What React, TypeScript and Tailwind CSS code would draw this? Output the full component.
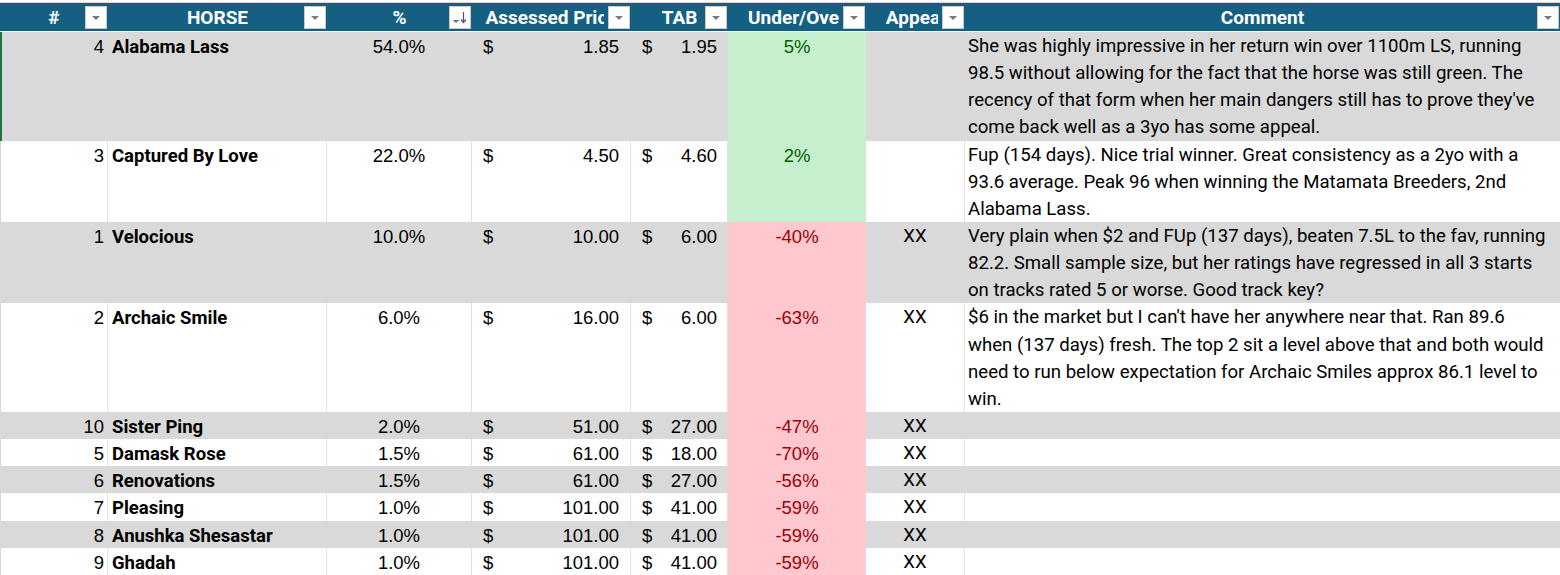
import React from 'react';

type Row = {
  no: number;
  horse: string;
  pct: string;
  price: string;
  tab: string;
  uo: string;
  appeal: string;
  comment: string[];
};

const rows: Row[] = [
  {
    no: 4,
    horse: 'Alabama Lass',
    pct: '54.0%',
    price: '1.85',
    tab: '1.95',
    uo: '5%',
    appeal: '',
    comment: [
      'She was highly impressive in her return win over 1100m LS, running',
      '98.5 without allowing for the fact that the horse was still green. The',
      "recency of that form when her main dangers still has to prove they've",
      'come back well as a 3yo has some appeal.',
    ],
  },
  {
    no: 3,
    horse: 'Captured By Love',
    pct: '22.0%',
    price: '4.50',
    tab: '4.60',
    uo: '2%',
    appeal: '',
    comment: [
      'Fup (154 days). Nice trial winner. Great consistency as a 2yo with a',
      '93.6 average. Peak 96 when winning the Matamata Breeders, 2nd',
      'Alabama Lass.',
    ],
  },
  {
    no: 1,
    horse: 'Velocious',
    pct: '10.0%',
    price: '10.00',
    tab: '6.00',
    uo: '-40%',
    appeal: 'XX',
    comment: [
      'Very plain when $2 and FUp (137 days), beaten 7.5L to the fav, running',
      '82.2. Small sample size, but her ratings have regressed in all 3 starts',
      'on tracks rated 5 or worse. Good track key?',
    ],
  },
  {
    no: 2,
    horse: 'Archaic Smile',
    pct: '6.0%',
    price: '16.00',
    tab: '6.00',
    uo: '-63%',
    appeal: 'XX',
    comment: [
      "$6 in the market but I can't have her anywhere near that. Ran 89.6",
      'when (137 days) fresh. The top 2 sit a level above that and both would',
      'need to run below expectation for Archaic Smiles approx 86.1 level to',
      'win.',
    ],
  },
  { no: 10, horse: 'Sister Ping', pct: '2.0%', price: '51.00', tab: '27.00', uo: '-47%', appeal: 'XX', comment: [] },
  { no: 5, horse: 'Damask Rose', pct: '1.5%', price: '61.00', tab: '18.00', uo: '-70%', appeal: 'XX', comment: [] },
  { no: 6, horse: 'Renovations', pct: '1.5%', price: '61.00', tab: '27.00', uo: '-56%', appeal: 'XX', comment: [] },
  { no: 7, horse: 'Pleasing', pct: '1.0%', price: '101.00', tab: '41.00', uo: '-59%', appeal: 'XX', comment: [] },
  { no: 8, horse: 'Anushka Shesastar', pct: '1.0%', price: '101.00', tab: '41.00', uo: '-59%', appeal: 'XX', comment: [] },
  { no: 9, horse: 'Ghadah', pct: '1.0%', price: '101.00', tab: '41.00', uo: '-59%', appeal: 'XX', comment: [] },
];

// row height by number of wrapped comment lines
const rowHeight: Record<number, string> = {
  1: 'h-[27.15px]',
  3: 'h-[81.45px]',
  4: 'h-[108.6px]',
};

const cols = 'grid grid-cols-[108px_219px_145px_159px_97px_138px_99px_595px]';
const numFont = "font-['Liberation_Sans',Arial,sans-serif] text-[18.5px] leading-[27.15px] pt-[1px]";
const textFont = "font-['Roboto',sans-serif] text-[18.6px]";

function FilterButton() {
  return (
    <div className="absolute right-[1px] top-[3px] h-[23px] w-[22px] bg-white border border-[#c9c9c9] shadow-[-4px_0_0_#156082]">
      <svg width="20" height="21" viewBox="0 0 20 21">
        <polygon points="6,9 14,9 10,13" fill="#7b7b7b" />
      </svg>
    </div>
  );
}

function SortButton() {
  return (
    <div className="absolute right-[1px] top-[3px] h-[23px] w-[22px] bg-white border border-[#c9c9c9]">
      <svg width="20" height="21" viewBox="0 0 20 21">
        <polygon points="3,13 9,13 6,16" fill="#6b6b6b" />
        <line x1="13.5" y1="5" x2="13.5" y2="15" stroke="#555" strokeWidth="1.2" />
        <polyline points="11,12.5 13.5,15.5 16,12.5" fill="none" stroke="#555" strokeWidth="1.2" />
      </svg>
    </div>
  );
}

function HeaderCell({ label, sort }: { label: string; sort?: boolean }) {
  return (
    <div className="relative flex h-full items-center justify-center overflow-hidden whitespace-nowrap pt-[3px]">
      <span>{label}</span>
      {sort ? <SortButton /> : <FilterButton />}
    </div>
  );
}

export default function App() {
  return (
    <div className="w-[1560px] h-[575px] overflow-hidden bg-white text-black">
      <div className="h-[3px] border-b border-[#d6d6d6]" />

      {/* header */}
      <div
        className={`${cols} h-[28px] bg-[#156082] text-white font-bold font-['Liberation_Sans_Narrow','Roboto',sans-serif] text-[19px]`}
      >
        <HeaderCell label="#" />
        <HeaderCell label="HORSE" />
        <HeaderCell label="%" sort />
        <HeaderCell label="Assessed Price" />
        <HeaderCell label="TAB" />
        <HeaderCell label="Under/Over" />
        <HeaderCell label="Appeal" />
        <HeaderCell label="Comment" />
      </div>
      <div className="h-[1px] bg-white" />

      {/* rows */}
      {rows.map((r, i) => {
        const banded = i % 2 === 0;
        const bg = banded ? 'bg-[#d9d9d9]' : 'bg-white';
        const line = banded ? 'border-r border-[#d9d9d9]' : 'border-r border-[#e2e2e2]';
        const pos = !r.uo.startsWith('-');
        const lines = r.comment.length ? r.comment : [''];
        return (
          <div key={r.no} className={`${cols} ${bg} ${rowHeight[lines.length]} overflow-hidden`}>
            <div
              className={`${line} ${numFont} text-right pr-[3px] ${
                i === 0 ? 'border-l-2 border-l-[#217346]' : banded ? '' : 'border-l border-l-[#d6d6d6]'
              }`}
            >
              {r.no}
            </div>
            <div className={`${line} font-['Roboto',sans-serif] font-bold text-[18.5px] leading-[27.15px] pt-[2px] pl-[4px] whitespace-nowrap`}>
              {r.horse}
            </div>
            <div className={`${line} ${numFont} text-center`}>{r.pct}</div>
            <div className={`${line} ${numFont} flex justify-between items-start pl-[11px] pr-[11px]`}>
              <span>$</span>
              <span>{r.price}</span>
            </div>
            <div className={`${line} ${numFont} flex justify-between items-start pl-[11px] pr-[10px]`}>
              <span>$</span>
              <span>{r.tab}</span>
            </div>
            <div
              className={`${numFont} text-center ${
                pos ? 'bg-[#c6efce] text-[#006100]' : 'bg-[#ffc7ce] text-[#9c0006]'
              }`}
            >
              {r.uo}
            </div>
            <div className={`${line} ${textFont} leading-[27.15px] pt-[1px] text-center`}>{r.appeal}</div>
            <div className={`${textFont} pl-[3px] pt-[1px]`}>
              {lines.map((l, j) => (
                <div key={j} className="h-[27.15px] leading-[27.15px] whitespace-nowrap">
                  {l}
                </div>
              ))}
            </div>
          </div>
        );
      })}
    </div>
  );
}
